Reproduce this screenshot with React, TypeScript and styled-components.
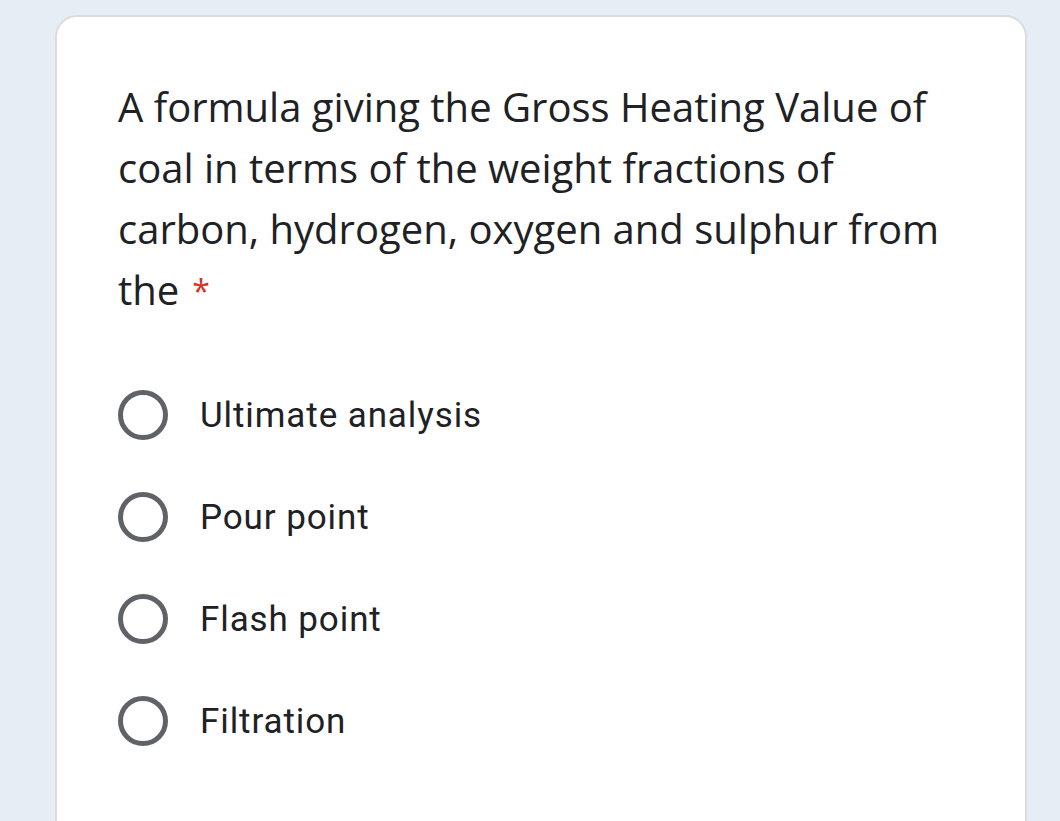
import React from 'react';
import styled, { createGlobalStyle } from 'styled-components';

const GlobalStyle = createGlobalStyle`
  html, body {
    margin: 0;
    padding: 0;
    background: #e6edf5;
  }
  body {
    font-family: Roboto, "Liberation Sans", sans-serif;
    color: #202124;
  }
`;

const Page = styled.div`
  padding: 15px 33px 0 55px;
  height: 821px;
  box-sizing: border-box;
  overflow: hidden;
`;

const Card = styled.div`
  background: #fff;
  border: 2px solid #dadce0;
  border-radius: 22px;
  padding: 59px 60px 60px 61px;
  min-height: 900px;
  box-sizing: border-box;
`;

const Question = styled.div`
  font-family: "Open Sans", Roboto, sans-serif;
  font-size: 40px;
  line-height: 61px;
  color: #202124;
  max-width: 825px;
`;

const Required = styled.span`
  color: #d93025;
  font-size: 32px;
  margin-left: 13px;
  vertical-align: 2px;
`;

const Options = styled.div`
  display: flex;
  flex-direction: column;
  gap: 52px;
  margin-top: 69px;
`;

const Option = styled.label`
  display: flex;
  align-items: center;
  gap: 32px;
  font-size: 35px;
  letter-spacing: 0.9px;
  color: #202124;
`;

const Radio = styled.span`
  width: 40px;
  height: 40px;
  border: 5px solid #5f6368;
  border-radius: 50%;
  flex-shrink: 0;
`;

const choices = ['Ultimate analysis', 'Pour point', 'Flash point', 'Filtration'];

export default function App() {
  return (
    <>
      <GlobalStyle />
      <Page>
        <Card>
          <Question>
            A formula giving the Gross Heating Value of coal in terms of the weight fractions of carbon,
            hydrogen, oxygen and sulphur from the<Required>*</Required>
          </Question>
          <Options>
            {choices.map(c => (
              <Option key={c}>
                <Radio />
                {c}
              </Option>
            ))}
          </Options>
        </Card>
      </Page>
    </>
  );
}
